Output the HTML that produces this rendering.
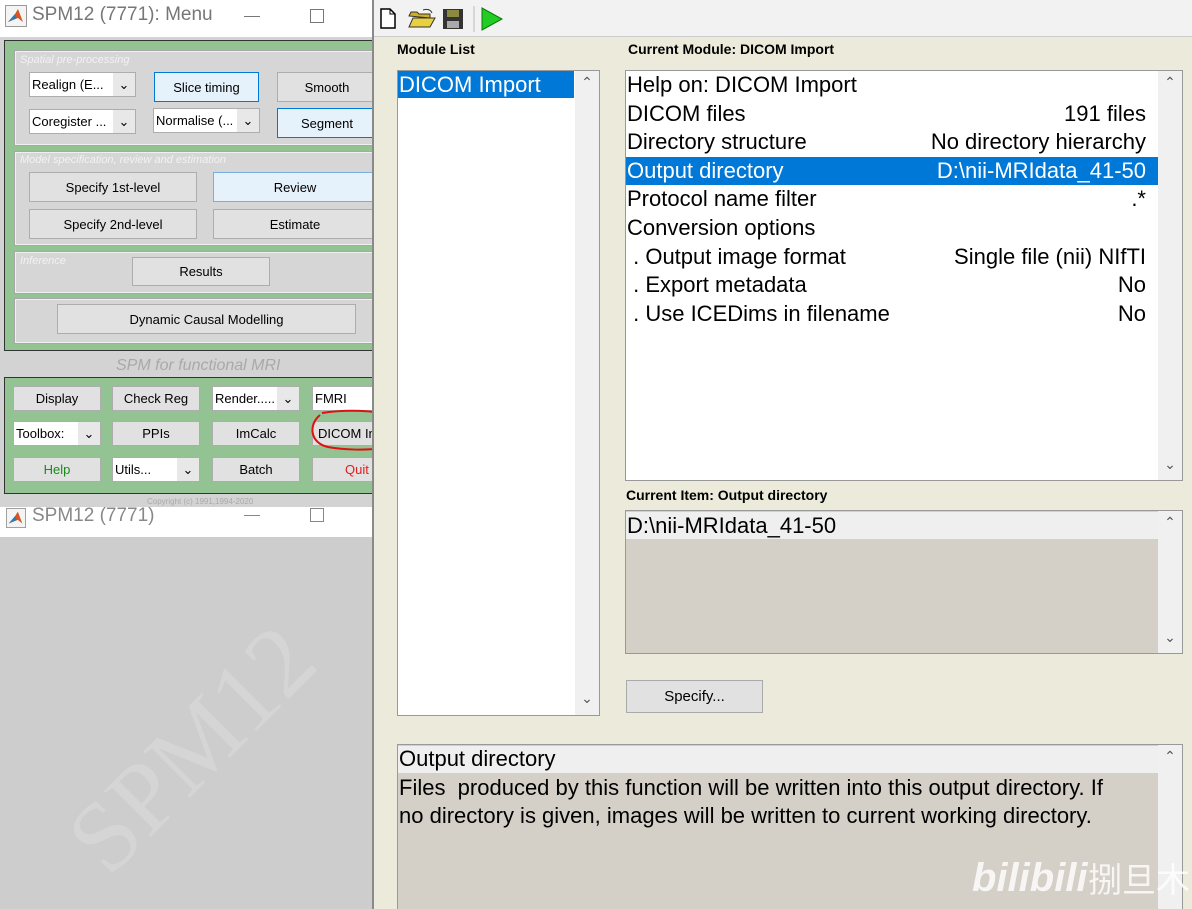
<!DOCTYPE html>
<html><head><meta charset="utf-8"><style>
*{box-sizing:border-box;margin:0;padding:0}
html,body{width:1192px;height:909px;overflow:hidden}
body{position:relative;background:#cdcdcd;font-family:"Liberation Sans",Arial,sans-serif}
.a{position:absolute}
.btn{position:absolute;background:#e1e1e1;border:1px solid #adadad;font-size:13px;color:#000;display:flex;align-items:center;justify-content:center;white-space:nowrap;overflow:hidden}
.btn.hl{background:#e5f1fb;border-color:#0078d7}
.dd{position:absolute;background:#fff;border:1px solid #adadad;font-size:13px;display:flex;align-items:center;padding-left:2px;white-space:nowrap;overflow:hidden}
.dd .ar{position:absolute;right:0;top:0;bottom:0;width:22px;background:#e8e8e8;display:flex;align-items:center;justify-content:center}
.sub{position:absolute;background:#d6d6d6;border:1px solid #f0f0f0;outline:1px solid #a8a8a8}
.lbl{position:absolute;font-size:11px;font-style:italic;color:#f2f2f2}
.row{position:absolute;left:0;width:532px;height:28px;font-size:22px;line-height:28px;padding-left:1px;white-space:nowrap}
.row span{position:absolute;right:12px;top:0}
.chev{position:absolute;font-size:14px;color:#555;width:24px;text-align:center}
</style></head><body>
<div class="a" style="left:0;top:0;width:372px;height:37px;background:#fff"></div>
<svg class="a" style="left:5px;top:5px" width="22" height="22" viewBox="0 0 22 22"><rect x="0.5" y="0.5" width="21" height="21" fill="#f4f4f4" stroke="#999"/><path d="M3 17 L10 9 L13 4 L18 17 L13 13 Z" fill="#d9541e"/><path d="M3 17 L10 9 L12 13 Z" fill="#2a7ab8"/></svg>
<div class="a" style="left:32px;top:4px;font-size:19px;color:#777">SPM12 (7771): Menu</div>
<div class="a" style="left:244px;top:16px;width:16px;height:1px;background:#777"></div>
<div class="a" style="left:310px;top:9px;width:14px;height:14px;border:1px solid #777"></div>
<div class="a" style="left:0;top:37px;width:372px;height:470px;background:#d3d3d3"></div>
<div class="a" style="left:4px;top:40px;width:372px;height:311px;background:#93c393;border:1px solid #333"></div>
<div class="sub" style="left:15px;top:51px;width:360px;height:94px"></div>
<div class="lbl" style="left:20px;top:54px">Spatial pre-processing</div>
<div class="dd" style="left:29px;top:72px;width:107px;height:25px">Realign (E...<div class="ar">&#8964;</div></div>
<div class="btn hl" style="left:154px;top:72px;width:105px;height:30px">Slice timing</div>
<div class="btn" style="left:277px;top:72px;width:100px;height:30px">Smooth</div>
<div class="dd" style="left:29px;top:109px;width:107px;height:25px">Coregister ...<div class="ar">&#8964;</div></div>
<div class="dd" style="left:153px;top:108px;width:107px;height:25px">Normalise (...<div class="ar">&#8964;</div></div>
<div class="btn hl" style="left:277px;top:108px;width:100px;height:30px">Segment</div>
<div class="sub" style="left:15px;top:152px;width:360px;height:93px"></div>
<div class="lbl" style="left:20px;top:154px">Model specification, review and estimation</div>
<div class="btn" style="left:29px;top:172px;width:168px;height:30px">Specify 1st-level</div>
<div class="btn hl" style="left:213px;top:172px;width:164px;height:30px;border-color:#7aaee0">Review</div>
<div class="btn" style="left:29px;top:209px;width:168px;height:30px">Specify 2nd-level</div>
<div class="btn" style="left:213px;top:209px;width:164px;height:30px">Estimate</div>
<div class="sub" style="left:15px;top:252px;width:360px;height:41px"></div>
<div class="lbl" style="left:20px;top:255px">Inference</div>
<div class="btn" style="left:132px;top:257px;width:138px;height:29px">Results</div>
<div class="sub" style="left:15px;top:299px;width:360px;height:44px"></div>
<div class="btn" style="left:57px;top:304px;width:299px;height:30px">Dynamic Causal Modelling</div>
<div class="a" style="left:116px;top:357px;font-size:16px;font-style:italic;color:#a9a9a9">SPM for functional MRI</div>
<div class="a" style="left:4px;top:377px;width:372px;height:117px;background:#93c393;border:1px solid #333"></div>
<div class="btn" style="left:13px;top:386px;width:88px;height:25px">Display</div>
<div class="btn" style="left:112px;top:386px;width:88px;height:25px">Check Reg</div>
<div class="dd" style="left:212px;top:386px;width:88px;height:25px">Render.....<div class="ar">&#8964;</div></div>
<div class="dd" style="left:312px;top:386px;width:64px;height:25px">FMRI</div>
<div class="dd" style="left:13px;top:421px;width:88px;height:25px">Toolbox:<div class="ar">&#8964;</div></div>
<div class="btn" style="left:112px;top:421px;width:88px;height:25px">PPIs</div>
<div class="btn" style="left:212px;top:421px;width:88px;height:25px">ImCalc</div>
<div class="btn" style="left:312px;top:421px;width:64px;height:25px;justify-content:flex-start;padding-left:5px">DICOM Im</div>
<div class="btn" style="left:13px;top:457px;width:88px;height:25px;color:#1a8a1a">Help</div>
<div class="dd" style="left:112px;top:457px;width:88px;height:25px">Utils...<div class="ar">&#8964;</div></div>
<div class="btn" style="left:212px;top:457px;width:88px;height:25px">Batch</div>
<div class="btn" style="left:312px;top:457px;width:64px;height:25px;color:#e02020;justify-content:flex-start;padding-left:32px">Quit</div>
<div class="a" style="left:147px;top:497px;font-size:8px;color:#aaa">Copyright (c) 1991,1994-2020</div>
<div class="a" style="left:0;top:507px;width:372px;height:30px;background:#fff"></div>
<svg class="a" style="left:5px;top:508px" width="22" height="20" viewBox="0 0 22 22"><rect x="0.5" y="0.5" width="21" height="21" fill="#f4f4f4" stroke="#999"/><path d="M3 17 L10 9 L13 4 L18 17 L13 13 Z" fill="#d9541e"/><path d="M3 17 L10 9 L12 13 Z" fill="#2a7ab8"/></svg>
<div class="a" style="left:32px;top:505px;font-size:19px;color:#888">SPM12 (7771)</div>
<div class="a" style="left:244px;top:515px;width:16px;height:1px;background:#888"></div>
<div class="a" style="left:310px;top:508px;width:14px;height:14px;border:1px solid #888"></div>
<div class="a" style="left:50px;top:820px;font-family:'Liberation Serif',serif;font-size:100px;color:#d5d5d5;transform:rotate(-45deg);transform-origin:left top;white-space:nowrap;line-height:1">SPM12</div>
<svg class="a" style="left:300px;top:405px" width="120" height="50"><path d="M22 8 C60 2 112 8 114 26 C116 44 60 48 28 42 C10 38 8 20 20 10" fill="none" stroke="#e01010" stroke-width="2"/></svg>
<div class="a" style="left:372px;top:0;width:820px;height:909px;background:#ecebdb;border-left:2px solid #8a8a8a"></div>
<div class="a" style="left:374px;top:0;width:818px;height:37px;background:#f2f2f2;border-bottom:1px solid #ccc"></div>
<svg class="a" style="left:378px;top:6px" width="130" height="26" viewBox="0 0 130 26">
<path d="M3 3 H12 L17 8 V22 H3 Z" fill="#fff" stroke="#000" stroke-width="1.5"/><path d="M12 3 V8 H17" fill="none" stroke="#000"/>
<path d="M31 10 L33 6 H39 L41 8 H52 V12 Z" fill="#d0b020" stroke="#333"/><path d="M31 21 L35 12 H57 L52 21 Z" fill="#e8d040" stroke="#333"/><path d="M45 4 Q52 2 54 7" fill="none" stroke="#333"/>
<rect x="65" y="3" width="20" height="20" fill="#333"/><rect x="69" y="4" width="12" height="7" fill="#8a8a40"/><rect x="69" y="15" width="12" height="7" fill="#aaa"/>
<line x1="96" y1="0" x2="96" y2="26" stroke="#bbb"/>
<path d="M104 2 L124 13 L104 24 Z" fill="#22cc22" stroke="#0a7a0a"/>
</svg>
<div class="a" style="left:397px;top:41px;font-size:14px;font-weight:bold">Module List</div>
<div class="a" style="left:628px;top:41px;font-size:14px;font-weight:bold">Current Module: DICOM Import</div>
<div class="a" style="left:397px;top:70px;width:203px;height:646px;background:#fff;border:1px solid #999"></div>
<div class="a" style="left:398px;top:71px;width:176px;height:27px;background:#0078d7;color:#fff;font-size:22px;line-height:27px;padding-left:1px;white-space:nowrap">DICOM Import</div>
<div class="a" style="left:575px;top:71px;width:24px;height:644px;background:#f0f0f0"></div>
<div class="chev" style="left:575px;top:74px">&#8963;</div>
<div class="chev" style="left:575px;top:690px">&#8964;</div>
<div class="a" style="left:625px;top:70px;width:558px;height:411px;background:#fff;border:1px solid #999;overflow:hidden">
<div class="row" style="top:0">Help on: DICOM Import</div>
<div class="row" style="top:28.6px">DICOM files<span>191 files</span></div>
<div class="row" style="top:57.2px">Directory structure<span>No directory hierarchy</span></div>
<div class="row" style="top:85.8px;background:#0078d7;color:#fff">Output directory<span>D:\nii-MRIdata_41-50</span></div>
<div class="row" style="top:114.4px">Protocol name filter<span>.*</span></div>
<div class="row" style="top:143px">Conversion options</div>
<div class="row" style="top:171.6px">&nbsp;. Output image format<span>Single file (nii) NIfTI</span></div>
<div class="row" style="top:200.2px">&nbsp;. Export metadata<span>No</span></div>
<div class="row" style="top:228.8px">&nbsp;. Use ICEDims in filename<span>No</span></div>
<div class="a" style="left:532px;top:0;width:24px;height:410px;background:#f0f0f0"></div>
<div class="chev" style="left:532px;top:3px">&#8963;</div>
<div class="chev" style="left:532px;top:385px">&#8964;</div>
</div>
<div class="a" style="left:626px;top:487px;font-size:14px;font-weight:bold">Current Item: Output directory</div>
<div class="a" style="left:625px;top:510px;width:558px;height:144px;background:#d4d0c8;border:1px solid #999;overflow:hidden">
<div class="a" style="left:0;top:1px;width:532px;height:27px;background:#efefef;font-size:22px;line-height:27px;padding-left:1px;white-space:nowrap">D:\nii-MRIdata_41-50</div>
<div class="a" style="left:532px;top:0;width:25px;height:143px;background:#f0f0f0"></div>
<div class="chev" style="left:532px;top:3px">&#8963;</div>
<div class="chev" style="left:532px;top:118px">&#8964;</div>
</div>
<div class="btn" style="left:626px;top:680px;width:137px;height:33px;font-size:15px;border-color:#aaa">Specify...</div>
<div class="a" style="left:397px;top:744px;width:786px;height:165px;background:#d4d0c8;border:1px solid #999;border-bottom:none;overflow:hidden">
<div class="a" style="left:0;top:1px;width:760px;height:27px;background:#efefef"></div>
<div class="a" style="left:1px;top:0;font-size:22px;line-height:28.5px;width:720px">Output directory<br>Files&nbsp; produced by this function will be written into this output directory. If<br>no directory is given, images will be written to current working directory.</div>
<div class="a" style="left:760px;top:0;width:25px;height:165px;background:#f0f0f0"></div>
<div class="chev" style="left:760px;top:3px">&#8963;</div>
</div>
<div class="a" style="left:972px;top:858px;font-size:40px;font-weight:bold;font-style:italic;color:rgba(255,255,255,.8);line-height:1">bilibili</div>
<div class="a" style="left:1088px;top:858px;font-size:34px;color:rgba(255,255,255,.8);font-family:'Noto Sans CJK SC',sans-serif;line-height:1.2">捌旦木</div>
</body></html>
